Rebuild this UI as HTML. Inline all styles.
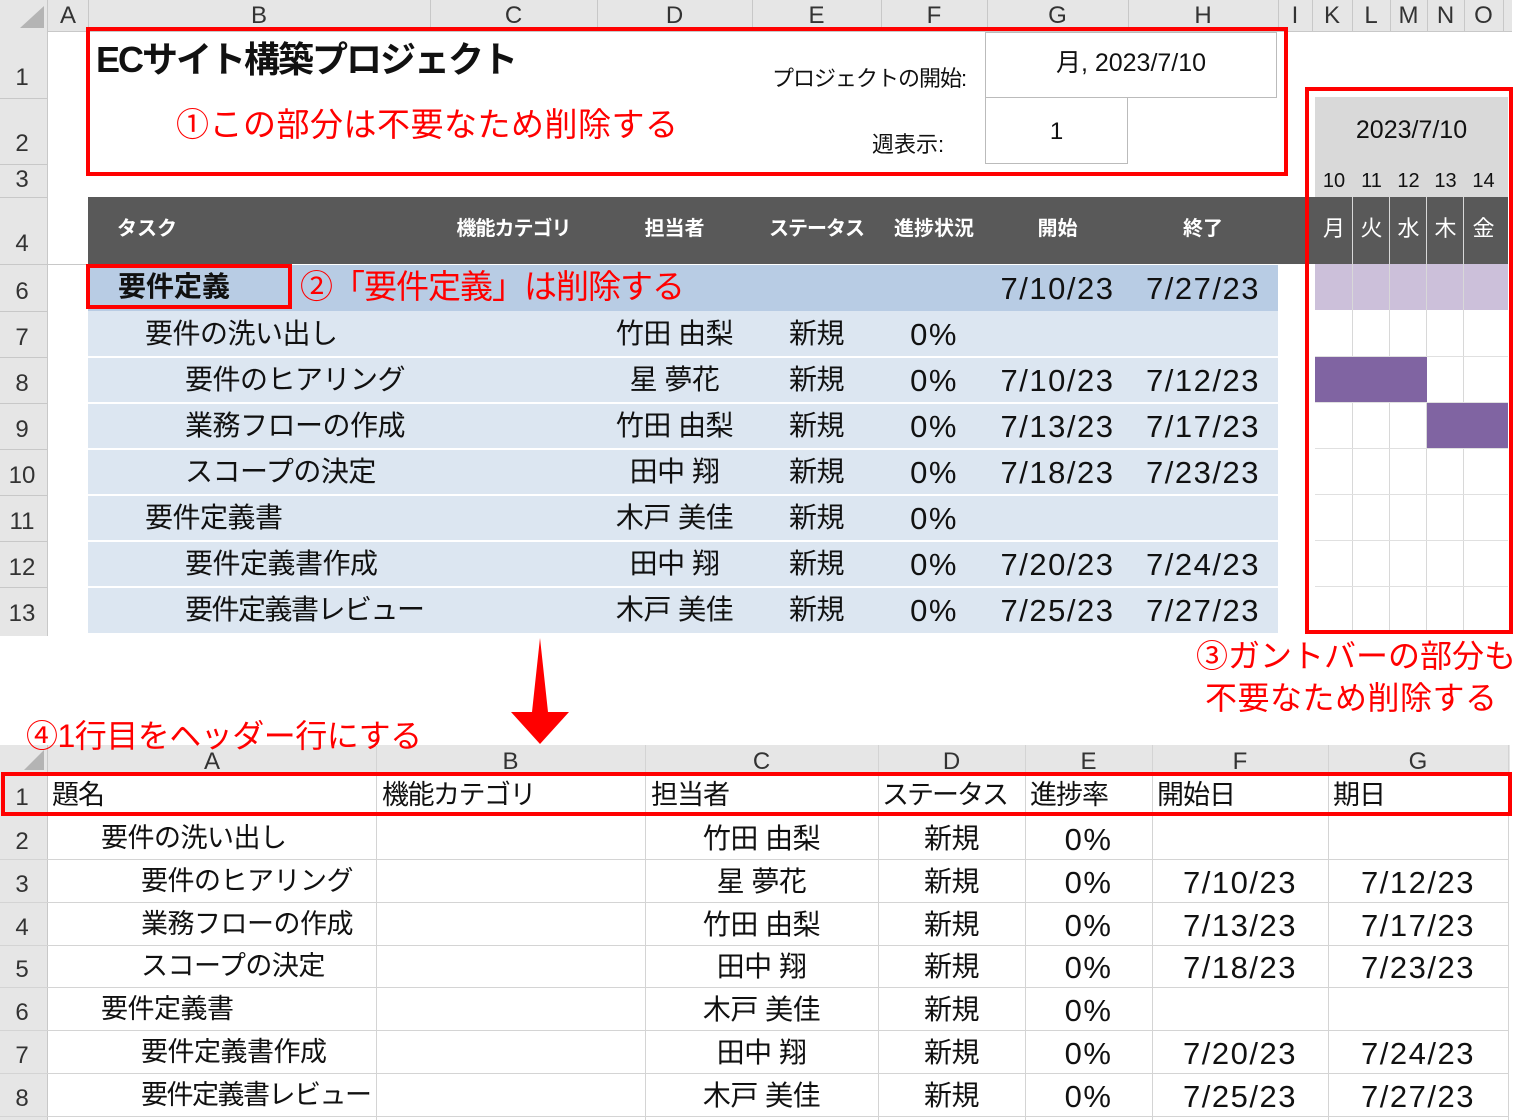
<!DOCTYPE html>
<html><head><meta charset="utf-8"><style>
body{margin:0;width:1536px;height:1120px;background:#fff;position:relative;overflow:hidden;font-family:"Liberation Sans","Noto Sans CJK JP",sans-serif;color:#111}
div{position:absolute;box-sizing:border-box}
.t{white-space:nowrap;line-height:1}
.c{text-align:center}
.hdr{background:#e6e6e6}
.ch{font-size:24px;color:#333;text-align:center;top:4px}
.rn{font-size:24px;color:#333;left:0;width:44px;text-align:center}
.red{border:4px solid #f00}
.rt{color:#f00}
.d{font-size:28px;letter-spacing:-0.5px}
.n{font-size:31px;letter-spacing:1.5px}
</style></head><body>

<div class="hdr" style="left:0;top:0;width:1512px;height:32px;border-bottom:1px solid #c8c8c8"></div>
<div class="hdr" style="left:0;top:0;width:48px;height:636px;border-right:1px solid #c8c8c8"></div>
<svg style="position:absolute;left:18px;top:6px" width="26" height="22"><polygon points="26,0 26,22 2,22" fill="#b4b4b4"/></svg>
<div style="left:88px;top:0;width:1px;height:32px;background:#c8c8c8"></div>
<div style="left:430px;top:0;width:1px;height:32px;background:#c8c8c8"></div>
<div style="left:597px;top:0;width:1px;height:32px;background:#c8c8c8"></div>
<div style="left:752px;top:0;width:1px;height:32px;background:#c8c8c8"></div>
<div style="left:881px;top:0;width:1px;height:32px;background:#c8c8c8"></div>
<div style="left:987px;top:0;width:1px;height:32px;background:#c8c8c8"></div>
<div style="left:1128px;top:0;width:1px;height:32px;background:#c8c8c8"></div>
<div style="left:1278px;top:0;width:1px;height:32px;background:#c8c8c8"></div>
<div style="left:1312px;top:0;width:1px;height:32px;background:#c8c8c8"></div>
<div style="left:1352px;top:0;width:1px;height:32px;background:#c8c8c8"></div>
<div style="left:1390px;top:0;width:1px;height:32px;background:#c8c8c8"></div>
<div style="left:1427px;top:0;width:1px;height:32px;background:#c8c8c8"></div>
<div style="left:1464px;top:0;width:1px;height:32px;background:#c8c8c8"></div>
<div style="left:1503px;top:0;width:1px;height:32px;background:#c8c8c8"></div>
<div class="t ch" style="left:48px;width:40px">A</div>
<div class="t ch" style="left:88px;width:342px">B</div>
<div class="t ch" style="left:430px;width:167px">C</div>
<div class="t ch" style="left:597px;width:155px">D</div>
<div class="t ch" style="left:752px;width:129px">E</div>
<div class="t ch" style="left:881px;width:106px">F</div>
<div class="t ch" style="left:987px;width:141px">G</div>
<div class="t ch" style="left:1128px;width:150px">H</div>
<div class="t ch" style="left:1278px;width:34px">I</div>
<div class="t ch" style="left:1312px;width:40px">K</div>
<div class="t ch" style="left:1352px;width:38px">L</div>
<div class="t ch" style="left:1390px;width:37px">M</div>
<div class="t ch" style="left:1427px;width:37px">N</div>
<div class="t ch" style="left:1464px;width:39px">O</div>

<div class="t rn" style="top:66px">1</div>
<div class="t rn" style="top:132px">2</div>
<div class="t rn" style="top:168px">3</div>
<div class="t rn" style="top:232px">4</div>
<div class="t rn" style="top:280px">6</div>
<div class="t rn" style="top:326px">7</div>
<div class="t rn" style="top:372px">8</div>
<div class="t rn" style="top:418px">9</div>
<div class="t rn" style="top:464px">10</div>
<div class="t rn" style="top:510px">11</div>
<div class="t rn" style="top:556px">12</div>
<div class="t rn" style="top:602px">13</div>
<div style="left:0;top:98px;width:48px;height:1px;background:#c8c8c8"></div>
<div style="left:0;top:164px;width:48px;height:1px;background:#c8c8c8"></div>
<div style="left:0;top:197px;width:48px;height:1px;background:#c8c8c8"></div>
<div style="left:0;top:264px;width:48px;height:1px;background:#c8c8c8"></div>
<div style="left:0;top:311px;width:48px;height:1px;background:#c8c8c8"></div>
<div style="left:0;top:357px;width:48px;height:1px;background:#c8c8c8"></div>
<div style="left:0;top:403px;width:48px;height:1px;background:#c8c8c8"></div>
<div style="left:0;top:449px;width:48px;height:1px;background:#c8c8c8"></div>
<div style="left:0;top:495px;width:48px;height:1px;background:#c8c8c8"></div>
<div style="left:0;top:541px;width:48px;height:1px;background:#c8c8c8"></div>
<div style="left:0;top:587px;width:48px;height:1px;background:#c8c8c8"></div>
<div style="left:48px;top:264px;width:40px;height:1px;background:#c8c8c8"></div>

<div class="t" style="left:96px;top:42px;font-size:36px;font-weight:bold;letter-spacing:-2px">ECサイト構築プロジェクト</div>
<div class="t" style="left:772px;top:68px;font-size:22px;letter-spacing:-1px">プロジェクトの開始:</div>
<div class="t" style="left:872px;top:134px;font-size:22px">週表示:</div>
<div style="left:985px;top:32px;width:292px;height:66px;border:1px solid #bbb"></div>
<div style="left:985px;top:97px;width:143px;height:67px;border:1px solid #bbb"></div>
<div class="t c" style="left:985px;top:51px;width:292px;font-size:25px">月, 2023/7/10</div>
<div class="t c" style="left:985px;top:120px;width:143px;font-size:24px">1</div>

<div style="left:88px;top:197px;width:1420px;height:67px;background:#595959"></div>
<div class="t" style="left:117px;top:219px;font-size:20px;color:#fff;font-weight:bold">タスク</div>
<div class="t c" style="left:430px;top:219px;width:167px;font-size:20px;color:#fff;font-weight:bold;letter-spacing:-1px">機能カテゴリ</div>
<div class="t c" style="left:597px;top:219px;width:155px;font-size:20px;color:#fff;font-weight:bold">担当者</div>
<div class="t c" style="left:752px;top:219px;width:129px;font-size:20px;color:#fff;font-weight:bold;letter-spacing:-1px">ステータス</div>
<div class="t c" style="left:881px;top:219px;width:106px;font-size:20px;color:#fff;font-weight:bold">進捗状況</div>
<div class="t c" style="left:987px;top:219px;width:141px;font-size:20px;color:#fff;font-weight:bold">開始</div>
<div class="t c" style="left:1128px;top:219px;width:150px;font-size:20px;color:#fff;font-weight:bold">終了</div>

<div style="left:1315px;top:97px;width:193px;height:100px;background:#d9d9d9"></div>
<div class="t c" style="left:1315px;top:118px;width:193px;font-size:25px">2023/7/10</div>
<div class="t c" style="left:1315px;top:171px;width:38px;font-size:20px">10</div>
<div class="t c" style="left:1353px;top:171px;width:37px;font-size:20px">11</div>
<div class="t c" style="left:1390px;top:171px;width:37px;font-size:20px">12</div>
<div class="t c" style="left:1427px;top:171px;width:37px;font-size:20px">13</div>
<div class="t c" style="left:1464px;top:171px;width:39px;font-size:20px">14</div>
<div class="t c" style="left:1315px;top:218px;width:38px;font-size:22px;color:#fff">月</div>
<div class="t c" style="left:1353px;top:218px;width:37px;font-size:22px;color:#fff">火</div>
<div class="t c" style="left:1390px;top:218px;width:37px;font-size:22px;color:#fff">水</div>
<div class="t c" style="left:1427px;top:218px;width:37px;font-size:22px;color:#fff">木</div>
<div class="t c" style="left:1464px;top:218px;width:39px;font-size:22px;color:#fff">金</div>
<div style="left:1315px;top:264px;width:193px;height:46px;background:#ccc0da"></div>
<div style="left:1352px;top:197px;width:1px;height:436px;background:#d8d8d8"></div>
<div style="left:1389px;top:197px;width:1px;height:436px;background:#d8d8d8"></div>
<div style="left:1426px;top:197px;width:1px;height:436px;background:#d8d8d8"></div>
<div style="left:1463px;top:197px;width:1px;height:436px;background:#d8d8d8"></div>
<div style="left:1315px;top:356px;width:193px;height:1px;background:#e0e0e0"></div>
<div style="left:1315px;top:402px;width:193px;height:1px;background:#e0e0e0"></div>
<div style="left:1315px;top:448px;width:193px;height:1px;background:#e0e0e0"></div>
<div style="left:1315px;top:494px;width:193px;height:1px;background:#e0e0e0"></div>
<div style="left:1315px;top:540px;width:193px;height:1px;background:#e0e0e0"></div>
<div style="left:1315px;top:586px;width:193px;height:1px;background:#e0e0e0"></div>
<div style="left:1315px;top:357px;width:112px;height:45px;background:#8064a2"></div>
<div style="left:1427px;top:403px;width:81px;height:45px;background:#8064a2"></div>

<div style="left:88px;top:265px;width:1190px;height:46px;background:#b8cce4"></div>
<div style="left:88px;top:311px;width:1190px;height:322px;background:#dce6f1"></div>
<div style="left:88px;top:356px;width:1190px;height:2px;background:#fff"></div>
<div style="left:88px;top:402px;width:1190px;height:2px;background:#fff"></div>
<div style="left:88px;top:448px;width:1190px;height:2px;background:#fff"></div>
<div style="left:88px;top:494px;width:1190px;height:2px;background:#fff"></div>
<div style="left:88px;top:540px;width:1190px;height:2px;background:#fff"></div>
<div style="left:88px;top:586px;width:1190px;height:2px;background:#fff"></div>

<div class="t" style="left:118px;top:273px;font-size:28px;font-weight:bold">要件定義</div>
<div class="t n c" style="left:987px;top:273px;width:141px">7/10/23</div>
<div class="t n c" style="left:1128px;top:273px;width:150px">7/27/23</div>

<div class="t d" style="left:145px;top:320px">要件の洗い出し</div>
<div class="t d c" style="left:597px;top:320px;width:155px">竹田 由梨</div>
<div class="t d c" style="left:752px;top:320px;width:129px">新規</div>
<div class="t n c" style="left:881px;top:319px;width:106px">0%</div>

<div class="t d" style="left:185px;top:366px">要件のヒアリング</div>
<div class="t d c" style="left:597px;top:366px;width:155px">星 夢花</div>
<div class="t d c" style="left:752px;top:366px;width:129px">新規</div>
<div class="t n c" style="left:881px;top:365px;width:106px">0%</div>
<div class="t n c" style="left:987px;top:365px;width:141px">7/10/23</div>
<div class="t n c" style="left:1128px;top:365px;width:150px">7/12/23</div>

<div class="t d" style="left:185px;top:412px">業務フローの作成</div>
<div class="t d c" style="left:597px;top:412px;width:155px">竹田 由梨</div>
<div class="t d c" style="left:752px;top:412px;width:129px">新規</div>
<div class="t n c" style="left:881px;top:411px;width:106px">0%</div>
<div class="t n c" style="left:987px;top:411px;width:141px">7/13/23</div>
<div class="t n c" style="left:1128px;top:411px;width:150px">7/17/23</div>

<div class="t d" style="left:185px;top:458px">スコープの決定</div>
<div class="t d c" style="left:597px;top:458px;width:155px">田中 翔</div>
<div class="t d c" style="left:752px;top:458px;width:129px">新規</div>
<div class="t n c" style="left:881px;top:457px;width:106px">0%</div>
<div class="t n c" style="left:987px;top:457px;width:141px">7/18/23</div>
<div class="t n c" style="left:1128px;top:457px;width:150px">7/23/23</div>

<div class="t d" style="left:145px;top:504px">要件定義書</div>
<div class="t d c" style="left:597px;top:504px;width:155px">木戸 美佳</div>
<div class="t d c" style="left:752px;top:504px;width:129px">新規</div>
<div class="t n c" style="left:881px;top:503px;width:106px">0%</div>

<div class="t d" style="left:185px;top:550px">要件定義書作成</div>
<div class="t d c" style="left:597px;top:550px;width:155px">田中 翔</div>
<div class="t d c" style="left:752px;top:550px;width:129px">新規</div>
<div class="t n c" style="left:881px;top:549px;width:106px">0%</div>
<div class="t n c" style="left:987px;top:549px;width:141px">7/20/23</div>
<div class="t n c" style="left:1128px;top:549px;width:150px">7/24/23</div>

<div class="t d" style="left:185px;top:596px;letter-spacing:-1.5px">要件定義書レビュー</div>
<div class="t d c" style="left:597px;top:596px;width:155px">木戸 美佳</div>
<div class="t d c" style="left:752px;top:596px;width:129px">新規</div>
<div class="t n c" style="left:881px;top:595px;width:106px">0%</div>
<div class="t n c" style="left:987px;top:595px;width:141px">7/25/23</div>
<div class="t n c" style="left:1128px;top:595px;width:150px">7/27/23</div>

<div class="red" style="left:86px;top:27px;width:1202px;height:149px"></div>
<div class="t rt" style="left:176px;top:108px;font-size:33px;letter-spacing:0.5px">①この部分は不要なため削除する</div>
<div class="red" style="left:86px;top:264px;width:206px;height:45px"></div>
<div class="t rt" style="left:300px;top:270px;font-size:33px;letter-spacing:-1px">②「要件定義」は削除する</div>
<div class="red" style="left:1305px;top:87px;width:208px;height:547px"></div>
<div class="t rt" style="left:1196px;top:640px;font-size:32px">③ガントバーの部分も</div>
<div class="t rt" style="left:1205px;top:682px;font-size:32px;letter-spacing:0.5px">不要なため削除する</div>

<svg style="position:absolute;left:505px;top:636px" width="70" height="110"><polygon points="35,2 43,76 64,76 35,108 6,76 27,76" fill="#f00"/></svg>

<div class="hdr" style="left:0;top:745px;width:1510px;height:28px;border-bottom:1px solid #c8c8c8"></div>
<div class="hdr" style="left:0;top:745px;width:48px;height:375px;border-right:1px solid #c8c8c8"></div>
<svg style="position:absolute;left:22px;top:750px" width="22" height="20"><polygon points="22,0 22,20 2,20" fill="#b4b4b4"/></svg>
<div class="t ch" style="left:48px;top:750px;width:328px">A</div>
<div class="t ch" style="left:376px;top:750px;width:269px">B</div>
<div class="t ch" style="left:645px;top:750px;width:233px">C</div>
<div class="t ch" style="left:878px;top:750px;width:147px">D</div>
<div class="t ch" style="left:1025px;top:750px;width:127px">E</div>
<div class="t ch" style="left:1152px;top:750px;width:176px">F</div>
<div class="t ch" style="left:1328px;top:750px;width:180px">G</div>
<div class="t rt" style="left:26px;top:720px;font-size:32px;letter-spacing:-0.5px">④1行目をヘッダー行にする</div>

<div style="left:376px;top:745px;width:1px;height:375px;background:#d4d4d4"></div>
<div style="left:645px;top:745px;width:1px;height:375px;background:#d4d4d4"></div>
<div style="left:878px;top:745px;width:1px;height:375px;background:#d4d4d4"></div>
<div style="left:1025px;top:745px;width:1px;height:375px;background:#d4d4d4"></div>
<div style="left:1152px;top:745px;width:1px;height:375px;background:#d4d4d4"></div>
<div style="left:1328px;top:745px;width:1px;height:375px;background:#d4d4d4"></div>
<div style="left:1508px;top:745px;width:1px;height:375px;background:#d4d4d4"></div>
<div style="left:0;top:859px;width:1508px;height:1px;background:#d4d4d4"></div>
<div style="left:0;top:902px;width:1508px;height:1px;background:#d4d4d4"></div>
<div style="left:0;top:945px;width:1508px;height:1px;background:#d4d4d4"></div>
<div style="left:0;top:987px;width:1508px;height:1px;background:#d4d4d4"></div>
<div style="left:0;top:1030px;width:1508px;height:1px;background:#d4d4d4"></div>
<div style="left:0;top:1073px;width:1508px;height:1px;background:#d4d4d4"></div>
<div style="left:0;top:1116px;width:1508px;height:1px;background:#d4d4d4"></div>

<div class="t rn" style="top:786px">1</div>
<div class="t rn" style="top:830px">2</div>
<div class="t rn" style="top:873px">3</div>
<div class="t rn" style="top:916px">4</div>
<div class="t rn" style="top:958px">5</div>
<div class="t rn" style="top:1001px">6</div>
<div class="t rn" style="top:1044px">7</div>
<div class="t rn" style="top:1087px">8</div>

<div class="t" style="left:52px;top:782px;font-size:27px;letter-spacing:-1px">題名</div>
<div class="t" style="left:382px;top:782px;font-size:27px;letter-spacing:-1.5px">機能カテゴリ</div>
<div class="t" style="left:651px;top:782px;font-size:27px;letter-spacing:-1px">担当者</div>
<div class="t" style="left:882px;top:782px;font-size:27px;letter-spacing:-2px">ステータス</div>
<div class="t" style="left:1030px;top:782px;font-size:27px;letter-spacing:-1px">進捗率</div>
<div class="t" style="left:1157px;top:782px;font-size:27px;letter-spacing:-1px">開始日</div>
<div class="t" style="left:1333px;top:782px;font-size:27px;letter-spacing:-1px">期日</div>
<div class="red" style="left:1px;top:772px;width:1511px;height:44px"></div>

<div class="t d" style="left:101px;top:825px;font-size:27px">要件の洗い出し</div>
<div class="t d c" style="left:645px;top:825px;width:233px">竹田 由梨</div>
<div class="t d c" style="left:878px;top:825px;width:147px">新規</div>
<div class="t n c" style="left:1025px;top:824px;width:127px">0%</div>

<div class="t d" style="left:141px;top:868px;font-size:27px">要件のヒアリング</div>
<div class="t d c" style="left:645px;top:868px;width:233px">星 夢花</div>
<div class="t d c" style="left:878px;top:868px;width:147px">新規</div>
<div class="t n c" style="left:1025px;top:867px;width:127px">0%</div>
<div class="t n c" style="left:1152px;top:867px;width:176px">7/10/23</div>
<div class="t n c" style="left:1328px;top:867px;width:180px">7/12/23</div>

<div class="t d" style="left:141px;top:911px;font-size:27px">業務フローの作成</div>
<div class="t d c" style="left:645px;top:911px;width:233px">竹田 由梨</div>
<div class="t d c" style="left:878px;top:911px;width:147px">新規</div>
<div class="t n c" style="left:1025px;top:910px;width:127px">0%</div>
<div class="t n c" style="left:1152px;top:910px;width:176px">7/13/23</div>
<div class="t n c" style="left:1328px;top:910px;width:180px">7/17/23</div>

<div class="t d" style="left:141px;top:953px;font-size:27px">スコープの決定</div>
<div class="t d c" style="left:645px;top:953px;width:233px">田中 翔</div>
<div class="t d c" style="left:878px;top:953px;width:147px">新規</div>
<div class="t n c" style="left:1025px;top:952px;width:127px">0%</div>
<div class="t n c" style="left:1152px;top:952px;width:176px">7/18/23</div>
<div class="t n c" style="left:1328px;top:952px;width:180px">7/23/23</div>

<div class="t d" style="left:101px;top:996px;font-size:27px">要件定義書</div>
<div class="t d c" style="left:645px;top:996px;width:233px">木戸 美佳</div>
<div class="t d c" style="left:878px;top:996px;width:147px">新規</div>
<div class="t n c" style="left:1025px;top:995px;width:127px">0%</div>

<div class="t d" style="left:141px;top:1039px;font-size:27px">要件定義書作成</div>
<div class="t d c" style="left:645px;top:1039px;width:233px">田中 翔</div>
<div class="t d c" style="left:878px;top:1039px;width:147px">新規</div>
<div class="t n c" style="left:1025px;top:1038px;width:127px">0%</div>
<div class="t n c" style="left:1152px;top:1038px;width:176px">7/20/23</div>
<div class="t n c" style="left:1328px;top:1038px;width:180px">7/24/23</div>

<div class="t d" style="left:141px;top:1082px;font-size:27px;letter-spacing:-1.5px">要件定義書レビュー</div>
<div class="t d c" style="left:645px;top:1082px;width:233px">木戸 美佳</div>
<div class="t d c" style="left:878px;top:1082px;width:147px">新規</div>
<div class="t n c" style="left:1025px;top:1081px;width:127px">0%</div>
<div class="t n c" style="left:1152px;top:1081px;width:176px">7/25/23</div>
<div class="t n c" style="left:1328px;top:1081px;width:180px">7/27/23</div>

</body></html>
